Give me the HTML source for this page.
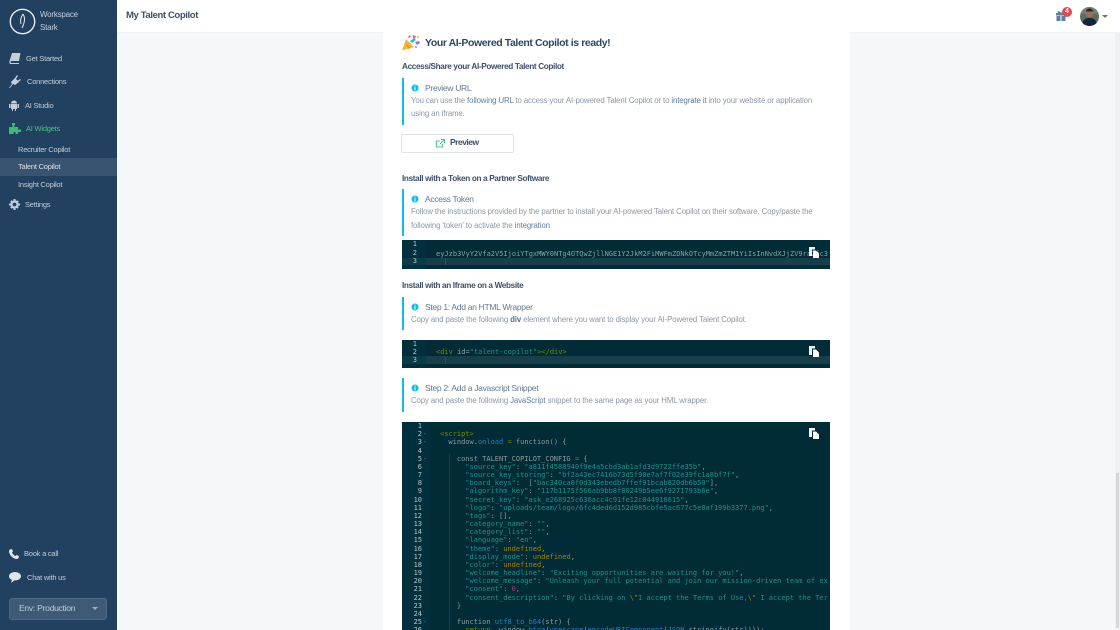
<!DOCTYPE html>
<html><head><meta charset="utf-8">
<style>
*{box-sizing:border-box;margin:0;padding:0}
html,body{width:1120px;height:630px;overflow:hidden;background:#f6f7f9;font-family:"Liberation Sans",sans-serif}
#w{position:absolute;left:0;top:0;width:1120px;height:630px;overflow:hidden;filter:blur(.3px)}
.a{position:absolute;white-space:nowrap}
#side{position:absolute;left:0;top:0;width:117px;height:630px;background:#22405f}
#top{position:absolute;left:117px;top:0;width:1003px;height:32px;background:#fff}
#card{position:absolute;left:383px;top:32px;width:467px;height:598px;background:#fff}
.n{font-size:7.500px;color:#c3ced9;line-height:10px;letter-spacing:-.22px}
.h{font-size:8.200px;font-weight:bold;color:#3d5168;line-height:11px;letter-spacing:-.35px}
.bar{position:absolute;left:402px;width:2px;background:#0fbde4}
.t{font-size:8.500px;color:#66788c;line-height:11px;letter-spacing:-.3px}
.d{font-size:7.800px;color:#8a98a8;line-height:10px;letter-spacing:-.11px}
.d b{color:#5b6f84}.d i{font-style:normal;color:#5f7f9f}
.code{position:absolute;left:402px;width:428px;background:#012b37;overflow:hidden}
.gut{position:absolute;left:0;top:0;bottom:0;background:#012f3c}
.l,.g{position:absolute;font:7px/8px "DejaVu Sans Mono",monospace;white-space:pre}
.g{color:#b6c4c4;text-align:right}
.l{color:#8d9c9c}
.s{color:#1f918b}.k{color:#768a00}.b{color:#2180c2}.u{color:#a88000}.m{color:#c3307a}
</style></head><body><div id="w">
<div id="top"></div>
<div class="a" style="left:126px;top:10px;font-size:9.500px;line-height:12px;font-weight:bold;color:#3d5168;letter-spacing:-.38px">My Talent Copilot</div>
<div class="a" style="left:117px;top:32px;width:1003px;height:1px;background:#f1f2f4"></div>

<div id="side"></div>
<svg class="a" style="left:9px;top:8px" width="27" height="27" viewBox="0 0 27 27"><circle cx="13.5" cy="13.5" r="12.2" fill="none" stroke="#e9eef3" stroke-width="1.4"/><path d="M14 6c2 3 2 8-1 14M14 6c-2 3-3 7-2 10" fill="none" stroke="#e9eef3" stroke-width="1"/></svg>
<div class="a n" style="left:40px;top:10px;font-size:8px">Workspace</div>
<div class="a n" style="left:40px;top:23px;font-size:8px">Stark</div>

<svg class="a" style="left:9px;top:53px" width="12" height="11" viewBox="0 0 12 11"><path d="M3 0h8.500L10 8H2.500a1 1 0 0 0 0 2H10v1H2C.5 11 0 10 .5 8z" fill="#c3ced9"/></svg>
<div class="a n" style="left:26px;top:54px">Get Started</div>
<svg class="a" style="left:9px;top:75px" width="12" height="13" viewBox="0 0 12 13"><path d="M0 13l3-4-1-2 4-4 4 4-4 3-2-1-3 4zM6 3l2-3 1 1-2 3zM8 6l3-2 1 1-3 2z" fill="#c3ced9"/></svg>
<div class="a n" style="left:27px;top:77px">Connections</div>
<svg class="a" style="left:9px;top:100px" width="10" height="11" viewBox="0 0 10 11"><path d="M2 3.500a3 3 0 0 1 6 0zM2 4h6v5H7v2H6V9H4v2H3V9H2zM0 4h1.500v4H0zM8.500 4H10v4H8.500z" fill="#c3ced9"/></svg>
<div class="a n" style="left:25px;top:101px">AI Studio</div>
<svg class="a" style="left:9px;top:123px" width="12" height="11" viewBox="0 0 12 11"><path d="M0 11V4h3.500V2H3V0h3v2h-.500v2H9v2.500h3V9H9v2H6.500V9h-2v2z" fill="#3dbb77"/></svg>
<div class="a n" style="left:26px;top:124px;color:#4cc184">AI Widgets</div>
<div class="a n" style="left:18px;top:145px">Recruiter Copilot</div>
<div class="a" style="left:0;top:158px;width:117px;height:18px;background:#395470"></div>
<div class="a n" style="left:18px;top:162px;color:#d8e0e7">Talent Copilot</div>
<div class="a n" style="left:18px;top:180px">Insight Copilot</div>
<svg class="a" style="left:9px;top:199px" width="11" height="11" viewBox="0 0 11 11"><circle cx="5.500" cy="5.500" r="3" fill="none" stroke="#c3ced9" stroke-width="2.200"/><path d="M4.500 0h2v2h-2zM4.500 9h2v2h-2zM0 4.500h2v2H0zM9 4.500h2v2H9zM1.200 2.600l1.400-1.400 1 1-1.400 1.400zM7.400 8.800l1.400-1.400 1 1-1.400 1.400zM1.200 8.400l1.400 1.400 1-1-1.400-1.400zM7.400 2.200l1.400 1.400 1-1L8.400 1.200z" fill="#c3ced9"/></svg>
<div class="a n" style="left:25px;top:200px">Settings</div>
<svg class="a" style="left:9px;top:549px" width="10" height="10" viewBox="0 0 10 10"><path d="M1 .5L3 0l1 2.500L3 3.500C3.500 5 5 6.500 6.500 7L7.500 6 10 7l-.5 2c-.2.700-1 1-1.500 1C4 10 0 6 0 2 0 1.500.3.700 1 .5z" fill="#dfe5eb"/></svg>
<div class="a n" style="left:24px;top:549px">Book a call</div>
<svg class="a" style="left:9px;top:572px" width="12" height="11" viewBox="0 0 12 11"><path d="M6 0c3.300 0 6 1.800 6 4.200S9.300 8.400 6 8.400H5.300C4.300 9.500 3 10.500 1.800 10.800c.6-.8 1-1.800 1-3C1.100 7.100 0 5.800 0 4.200 0 1.800 2.700 0 6 0z" fill="#dfe5eb"/></svg>
<div class="a n" style="left:27px;top:573px">Chat with us</div>
<div class="a" style="left:9px;top:598px;width:98px;height:22px;background:#3e5a76;border:1px solid #4d6882;border-radius:3px"></div>
<div class="a" style="left:19px;top:603px;font-size:8.500px;line-height:11px;color:#c3ced9;letter-spacing:-.25px">Env: Production</div>
<div class="a" style="left:92px;top:607px;border:3px solid transparent;border-top:3px solid #9fb0c0;border-bottom:0"></div>

<div id="card"></div>
<svg class="a" style="left:402px;top:34px" width="18" height="17" viewBox="0 0 18 17"><path d="M0 16.500L4 5l8 8z" fill="#f3b53f"/><path d="M3 8l6 6-3 1z" fill="#e79a2c"/><path d="M6 3l2-2 1 2-2 1zM11 1l3 1-1 3-2-1z" fill="#e8638f"/><path d="M8 7l4-3 2 2-4 3z" fill="#3fb6c9"/><path d="M13 8l4-1 1 2-3 2z" fill="#9a6fd0"/><circle cx="16" cy="3" r="1" fill="#f3b53f"/><circle cx="14" cy="13" r="1" fill="#56c0a0"/></svg>
<div class="a" style="left:425px;top:37px;font-size:10.500px;line-height:13px;font-weight:bold;color:#2f4660;letter-spacing:-.41px">Your AI-Powered Talent Copilot is ready!</div>
<div class="a h" style="left:402px;top:61px">Access/Share your AI-Powered Talent Copilot</div>

<div class="bar" style="top:78px;height:47px"></div>
<svg class="a" style="left:411px;top:84px" width="8" height="8" viewBox="0 0 8 8"><circle cx="4" cy="4" r="3.500" fill="#0fbde4"/><path d="M3.500 1.500h1v1h-1zM3.500 3.200h1v3.300h-1z" fill="#fff"/></svg>
<div class="a t" style="left:425px;top:83px">Preview URL</div>
<div class="a d" style="left:411px;top:96px">You can use the <i>following URL</i> to access your AI-powered Talent Copilot or to <i>integrate it</i> into your website or application</div>
<div class="a d" style="left:411px;top:109px">using an iframe.</div>
<div class="a" style="left:401px;top:134px;width:113px;height:19px;background:#fff;border:1px solid #dfe3e8;border-radius:2px"></div>
<svg class="a" style="left:436px;top:139px" width="9" height="9" viewBox="0 0 9 9"><path d="M6.500 5v3H.5V2H4M5 .5h3.500V4M8.500.5L4 5" fill="none" stroke="#55c48a" stroke-width="1"/></svg>
<div class="a" style="left:450px;top:137px;font-size:8.500px;line-height:11px;font-weight:bold;color:#3d5168;letter-spacing:-.5px">Preview</div>

<div class="a h" style="left:402px;top:173px">Install with a Token on a Partner Software</div>
<div class="bar" style="top:189px;height:47px"></div>
<svg class="a" style="left:411px;top:195px" width="8" height="8" viewBox="0 0 8 8"><circle cx="4" cy="4" r="3.500" fill="#0fbde4"/><path d="M3.500 1.500h1v1h-1zM3.500 3.200h1v3.300h-1z" fill="#fff"/></svg>
<div class="a t" style="left:425px;top:194px">Access Token</div>
<div class="a d" style="left:411px;top:207px">Follow the instructions provided by the partner to install your AI-powered Talent Copilot on their software. Copy/paste the</div>
<div class="a d" style="left:411px;top:221px">following 'token' to activate the <i>integration</i></div>

<div class="code" style="top:240px;height:29px">
<div class="gut" style="width:24px"></div>
<div class="a" style="left:24px;top:18px;width:404px;height:7px;background:#173e4a"></div>
<div class="a" style="left:0;top:18px;width:24px;height:7px;background:#0c3b48"></div>
<div class="g" style="left:0;width:15px;top:0;line-height:8.500px">1
2
3</div>
<div class="l" style="left:34px;top:10px;color:#7fa5a3">eyJzb3VyY2Vfa2V5IjoiYTgxMWY0NTg4OTQwZjllNGE1Y2JkM2FiMWFmZDNkOTcyMmZmZTM1YiIsInNvdXJjZV9ra2fc3</div>
<div class="a" style="left:43px;top:18px;width:1px;height:7px;background:#6b3a3a"></div>
</div>
<svg class="a" style="left:809px;top:247px" width="10" height="11" viewBox="0 0 10 11"><path d="M0 0h6v2.500H3V9H0z" fill="#eef2f3"/><path d="M4 3.500h3l3 3V11H4z" fill="#fff"/></svg>

<div class="a h" style="left:402px;top:280px">Install with an Iframe on a Website</div>
<div class="bar" style="top:297px;height:33px"></div>
<svg class="a" style="left:411px;top:303px" width="8" height="8" viewBox="0 0 8 8"><circle cx="4" cy="4" r="3.500" fill="#0fbde4"/><path d="M3.500 1.500h1v1h-1zM3.500 3.200h1v3.300h-1z" fill="#fff"/></svg>
<div class="a t" style="left:425px;top:302px">Step 1: Add an HTML Wrapper</div>
<div class="a d" style="left:411px;top:315px">Copy and paste the following <b>div</b> element where you want to display your AI-Powered Talent Copilot.</div>

<div class="code" style="top:340px;height:28px">
<div class="gut" style="width:24px"></div>
<div class="a" style="left:24px;top:16px;width:404px;height:8px;background:#173e4a"></div>
<div class="a" style="left:0;top:16px;width:24px;height:8px;background:#0c3b48"></div>
<div class="g" style="left:0;width:15px;top:0;line-height:8.200px">1
2
3</div>
<div class="l" style="left:34px;top:8px"><span class="k">&lt;div</span> <span style="color:#8fa0a0">id</span>=<span class="s">"talent-copilot"</span><span class="k">&gt;&lt;/div&gt;</span></div>
<div class="a" style="left:43px;top:17px;width:1px;height:7px;background:#6b3a3a"></div>
</div>
<svg class="a" style="left:809px;top:346px" width="10" height="11" viewBox="0 0 10 11"><path d="M0 0h6v2.500H3V9H0z" fill="#eef2f3"/><path d="M4 3.500h3l3 3V11H4z" fill="#fff"/></svg>

<div class="bar" style="top:378px;height:34px"></div>
<svg class="a" style="left:411px;top:384px" width="8" height="8" viewBox="0 0 8 8"><circle cx="4" cy="4" r="3.500" fill="#0fbde4"/><path d="M3.500 1.500h1v1h-1zM3.500 3.200h1v3.300h-1z" fill="#fff"/></svg>
<div class="a t" style="left:425px;top:383px">Step 2: Add a Javascript Snippet</div>
<div class="a d" style="left:411px;top:396px">Copy and paste the following <i>JavaScript</i> snippet to the same page as your HML wrapper.</div>

<div class="code" style="top:422px;height:208px">
<div class="gut" style="width:28px"></div>
<div class="g" style="left:0;width:20px;top:0;line-height:8.170px">1
2
3
4
5
6
7
8
9
10
11
12
13
14
15
16
17
18
19
20
21
22
23
24
25
26</div>
<div class="l" style="left:21px;top:8px;line-height:8.170px;color:#5d7d86">-
-

-</div>
<div class="l" style="left:21px;top:196px;color:#5d7d86">-</div>
<div class="a" style="left:47px;top:32px;width:1px;height:176px;background:#16414c"></div>
<div class="l" style="left:38px;top:0;line-height:8.170px">
<span class="k">&lt;script&gt;</span>
  window.<span class="b">onload</span> <span class="k">=</span> function() {

    const TALENT_COPILOT_CONFIG <span class="k">=</span> {
      <span class="s">"source_key"</span>: <span class="s">"a811f4588940f9e4a5cbd3ab1afd3d9722ffe35b"</span>,
      <span class="s">"source_key_storing"</span>: <span class="s">"bf2a43ec7416b73d5f90e7af7f02e39fc1a8bf7f"</span>,
      <span class="s">"board_keys"</span>:  [<span class="s">"bac340ca0f0d343ebedb7ffef91bcab820db6b50"</span>],
      <span class="s">"algorithm_key"</span>: <span class="s">"117b1175f566ab9bb8f80249b5ee6f9271793b6e"</span>,
      <span class="s">"secret_key"</span>: <span class="s">"ask_e268925c636acc4c91fe12c044918615"</span>,
      <span class="s">"logo"</span>: <span class="s">"uploads/team/logo/6fc4ded6d152d985cbfe5ac677c5e0af199b3377.png"</span>,
      <span class="s">"tags"</span>: [],
      <span class="s">"category_name"</span>: <span class="s">""</span>,
      <span class="s">"category_list"</span>: <span class="s">""</span>,
      <span class="s">"language"</span>: <span class="s">"en"</span>,
      <span class="s">"theme"</span>: <span class="u">undefined</span>,
      <span class="s">"display_mode"</span>: <span class="u">undefined</span>,
      <span class="s">"color"</span>: <span class="u">undefined</span>,
      <span class="s">"welcome_headline"</span>: <span class="s">"Exciting opportunities are waiting for you!"</span>,
      <span class="s">"welcome_message"</span>: <span class="s">"Unleash your full potential and join our mission-driven team of ex</span>
      <span class="s">"consent"</span>: <span class="m">0</span>,
      <span class="s">"consent_description"</span>: <span class="s">"By clicking on </span><span class="u">\"</span><span class="s">I accept the Terms of Use,</span><span class="u">\"</span><span class="s"> I accept the Ter</span>
    }

    function <span class="b">utf8_to_b64</span>(str) {
      <span class="k">return</span>  window.<span class="b">btoa</span>(<span class="b">unescape</span>(<span class="b">encodeURIComponent</span>(<span class="b">JSON</span>.stringify(str))));</div>
</div>
<svg class="a" style="left:809px;top:428px" width="10" height="11" viewBox="0 0 10 11"><path d="M0 0h6v2.500H3V9H0z" fill="#eef2f3"/><path d="M4 3.500h3l3 3V11H4z" fill="#fff"/></svg>

<svg class="a" style="left:1055px;top:10px" width="12" height="11" viewBox="0 0 12 11"><path d="M1 3h10v2.500H1zM1.500 6h4v5h-4zM6.500 6h4v5h-4zM3 3C1.500 1 4 0 6 3c2-3 4.500-2 3 0z" fill="#5d7fa3"/></svg>
<div class="a" style="left:1062px;top:7px;width:10px;height:10px;border-radius:50%;background:#e14a59;color:#fff;font-size:7px;line-height:10px;text-align:center;font-weight:bold">4</div>
<svg class="a" style="left:1080px;top:7px" width="19" height="19" viewBox="0 0 19 19"><defs><clipPath id="c"><circle cx="9.500" cy="9.500" r="9.500"/></clipPath></defs><g clip-path="url(#c)"><rect width="19" height="19" fill="#5d6f5c"/><rect width="19" height="7" fill="#6f7f7a"/><circle cx="9.500" cy="7" r="3.500" fill="#9a7458"/><path d="M6 4.500a3.500 3 0 0 1 7 0z" fill="#2c2420"/><path d="M2 19c0-6 3-8 7.500-8S17 13 17 19z" fill="#16253c"/></g></svg>
<div class="a" style="left:1102px;top:15px;border:3px solid transparent;border-top:3px solid #61778e;border-bottom:0"></div>

<div class="a" style="left:1115px;top:33px;width:5px;height:597px;background:#eff0f1"></div>
<div class="a" style="left:1116px;top:473px;width:3px;height:155px;background:#d6d7d8"></div>
</div></body></html>
